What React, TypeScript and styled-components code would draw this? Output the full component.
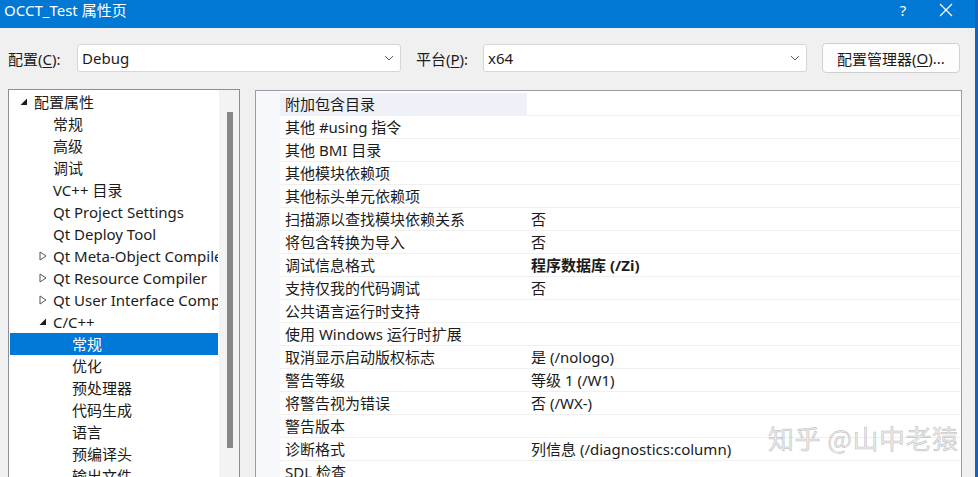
import React from "react";
import styled, { createGlobalStyle } from "styled-components";

const FONT = `"Noto Sans", "Noto Sans CJK SC", sans-serif`;

const GlobalStyle = createGlobalStyle`
  html, body {
    margin: 0;
    padding: 0;
    background: #f0f0f0;
  }
  * {
    box-sizing: border-box;
  }
`;

type TreeItem = {
  label: string;
  level: number;
  toggle?: "open" | "closed";
  selected?: boolean;
};

const treeItems: TreeItem[] = [
  { label: "配置属性", level: 0, toggle: "open" },
  { label: "常规", level: 1 },
  { label: "高级", level: 1 },
  { label: "调试", level: 1 },
  { label: "VC++ 目录", level: 1 },
  { label: "Qt Project Settings", level: 1 },
  { label: "Qt Deploy Tool", level: 1 },
  { label: "Qt Meta-Object Compiler", level: 1, toggle: "closed" },
  { label: "Qt Resource Compiler", level: 1, toggle: "closed" },
  { label: "Qt User Interface Compiler", level: 1, toggle: "closed" },
  { label: "C/C++", level: 1, toggle: "open" },
  { label: "常规", level: 2, selected: true },
  { label: "优化", level: 2 },
  { label: "预处理器", level: 2 },
  { label: "代码生成", level: 2 },
  { label: "语言", level: 2 },
  { label: "预编译头", level: 2 },
  { label: "输出文件", level: 2 },
];

type Prop = { name: string; value?: string; bold?: boolean; current?: boolean };

const props: Prop[] = [
  { name: "附加包含目录", current: true },
  { name: "其他 #using 指令" },
  { name: "其他 BMI 目录" },
  { name: "其他模块依赖项" },
  { name: "其他标头单元依赖项" },
  { name: "扫描源以查找模块依赖关系", value: "否" },
  { name: "将包含转换为导入", value: "否" },
  { name: "调试信息格式", value: "程序数据库 (/Zi)", bold: true },
  { name: "支持仅我的代码调试", value: "否" },
  { name: "公共语言运行时支持" },
  { name: "使用 Windows 运行时扩展" },
  { name: "取消显示启动版权标志", value: "是 (/nologo)" },
  { name: "警告等级", value: "等级 1 (/W1)" },
  { name: "将警告视为错误", value: "否 (/WX-)" },
  { name: "警告版本" },
  { name: "诊断格式", value: "列信息 (/diagnostics:column)" },
  { name: "SDL 检查" },
];

const Window = styled.div`
  position: relative;
  width: 978px;
  height: 477px;
  overflow: hidden;
  background: #f0f0f0;
  border-right: 3px solid #1662b8;
  font-family: ${FONT};
  color: #1b1b1b;
`;

const TitleBar = styled.div`
  height: 28px;
  background: #0078d4;
  color: #fff;
  display: flex;
  align-items: flex-start;
  padding: 0 0 0 4px;
  font-size: 15px;
  line-height: 20px;
`;

const Title = styled.div`
  flex: 1;
`;

const TitleButton = styled.div<{ $w: number }>`
  width: ${(p) => p.$w}px;
  height: 20px;
  display: flex;
  align-items: center;
  justify-content: center;
  font-size: 15px;
`;

const ConfigRow = styled.div`
  display: flex;
  align-items: center;
  height: 30px;
  margin-top: 15px;
  padding-left: 8px;
  font-size: 15px;
`;

const Label = styled.span<{ $w: number }>`
  width: ${(p) => p.$w}px;
  u {
    text-underline-offset: 2px;
  }
`;

const Combo = styled.div`
  width: 324px;
  height: 28px;
  background: #fff;
  border: 1px solid #d6d6d6;
  border-radius: 3px;
  display: flex;
  align-items: center;
  padding: 0 6px 0 4px;
  margin-right: 15px;
`;

const ComboText = styled.span`
  flex: 1;
`;

const ActionButton = styled.div`
  width: 138px;
  height: 30px;
  background: #fdfdfd;
  border: 1px solid #d0d0d0;
  border-radius: 4px;
  display: flex;
  align-items: center;
  justify-content: center;
  u {
    text-underline-offset: 2px;
  }
`;

const Body = styled.div`
  display: flex;
  align-items: flex-start;
  margin-top: 16px;
  padding-left: 8px;
`;

const TreePanel = styled.div`
  width: 232px;
  height: 420px;
  border: 1px solid #8e8f94;
  background: #fff;
  display: flex;
`;

const TreeList = styled.div`
  width: 210px;
  padding: 1px 1px 0 1px;
  overflow: hidden;
`;

const TreeRow = styled.div<{ $level: number; $selected?: boolean }>`
  height: 22px;
  line-height: 22px;
  font-size: 15px;
  white-space: nowrap;
  overflow: hidden;
  display: flex;
  align-items: center;
  padding-left: ${(p) => 10 + p.$level * 19}px;
  background: ${(p) => (p.$selected ? "#0078d7" : "transparent")};
  color: ${(p) => (p.$selected ? "#fff" : "#1b1b1b")};
`;

const Toggle = styled.span`
  width: 14px;
  flex: none;
  display: flex;
  align-items: center;
`;

const ScrollTrack = styled.div`
  width: 20px;
  background: #f3f3f3;
  display: flex;
  justify-content: center;
  padding-top: 22px;
`;

const ScrollThumb = styled.div`
  width: 6px;
  height: 336px;
  background: #878787;
  margin-left: 1px;
`;

const PropPanel = styled.div`
  width: 707px;
  height: 420px;
  margin-left: 15px;
  margin-top: 1px;
  border: 1px solid #9a9ca2;
  background: #fff;
  display: flex;
`;

const Gutter = styled.div`
  width: 24px;
  background: #f6f8fb;
`;

const PropGrid = styled.div`
  flex: 1;
  padding-top: 2px;
`;

const PropRow = styled.div`
  display: grid;
  grid-template-columns: 247px 1fr;
  height: 23px;
  border-bottom: 1px solid #f0f0f0;
  font-size: 15px;
  line-height: 22px;
  white-space: nowrap;
`;

const NameCell = styled.div<{ $current?: boolean }>`
  padding-left: 5px;
  background: ${(p) => (p.$current ? "#eef2f8" : "transparent")};
  overflow: hidden;
`;

const ValueCell = styled.div<{ $bold?: boolean }>`
  padding-left: 4px;
  font-weight: ${(p) => (p.$bold ? 700 : 400)};
`;

const Watermark = styled.div`
  position: absolute;
  left: 768px;
  top: 421px;
  font-family: "Noto Sans CJK SC", sans-serif;
  font-size: 26px;
  line-height: 34px;
  color: rgba(232, 232, 232, 0.85);
  -webkit-text-stroke: 0.5px rgba(165, 165, 165, 0.75);
  letter-spacing: 0.5px;
  white-space: nowrap;
`;

const Chevron = () => (
  <svg width="10" height="6" viewBox="0 0 10 6">
    <path d="M1 1 L5 5 L9 1" fill="none" stroke="#5f5f5f" strokeWidth="1" />
  </svg>
);

const Arrow = ({ open }: { open: boolean }) =>
  open ? (
    <svg width="8" height="8" viewBox="0 0 8 8">
      <polygon points="7,0.5 7,7 0.5,7" fill="#1b1b1b" />
    </svg>
  ) : (
    <svg width="8" height="10" viewBox="0 0 8 10">
      <polygon points="1,1 7,5 1,9" fill="none" stroke="#555" strokeWidth="1" />
    </svg>
  );

export default function App() {
  return (
    <Window>
      <GlobalStyle />
      <TitleBar>
        <Title>OCCT_Test 属性页</Title>
        <TitleButton $w={28}>?</TitleButton>
        <TitleButton $w={58}>
          <svg width="14" height="14" viewBox="0 0 14 14">
            <path d="M1 1 L13 13 M13 1 L1 13" stroke="#fff" strokeWidth="1.2" />
          </svg>
        </TitleButton>
      </TitleBar>

      <ConfigRow>
        <Label $w={69}>
          配置(<u>C</u>):
        </Label>
        <Combo>
          <ComboText>Debug</ComboText>
          <Chevron />
        </Combo>
        <Label $w={67}>
          平台(<u>P</u>):
        </Label>
        <Combo>
          <ComboText>x64</ComboText>
          <Chevron />
        </Combo>
        <ActionButton>
          配置管理器(<u>O</u>)...
        </ActionButton>
      </ConfigRow>

      <Body>
        <TreePanel>
          <TreeList>
            {treeItems.map((item, i) => (
              <TreeRow key={i} $level={item.level} $selected={item.selected}>
                <Toggle>{item.toggle && <Arrow open={item.toggle === "open"} />}</Toggle>
                {item.label}
              </TreeRow>
            ))}
          </TreeList>
          <ScrollTrack>
            <ScrollThumb />
          </ScrollTrack>
        </TreePanel>

        <PropPanel>
          <Gutter />
          <PropGrid>
            {props.map((p, i) => (
              <PropRow key={i}>
                <NameCell $current={p.current}>{p.name}</NameCell>
                <ValueCell $bold={p.bold}>{p.value}</ValueCell>
              </PropRow>
            ))}
          </PropGrid>
        </PropPanel>
      </Body>

      <Watermark>知乎 @山中老猿</Watermark>
    </Window>
  );
}
